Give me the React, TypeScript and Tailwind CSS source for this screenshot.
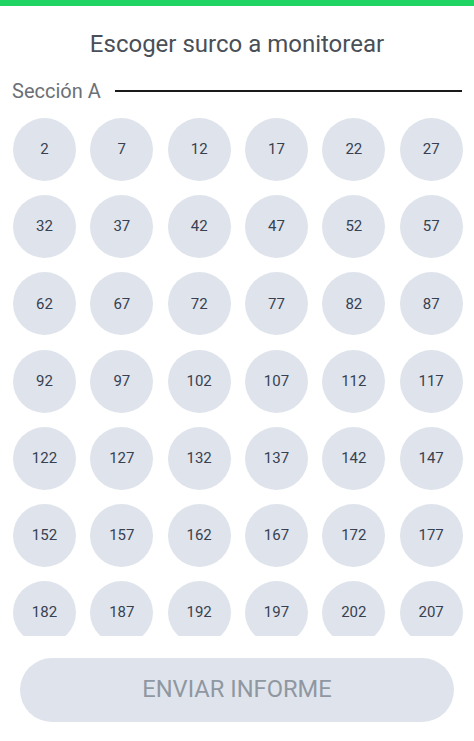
const surcos = Array.from({ length: 42 }, (_, i) => 2 + i * 5);

export default function App() {
  return (
    <div
      className="flex h-[741px] w-full flex-col overflow-hidden bg-white"
      style={{ fontFamily: "Roboto, 'Liberation Sans', sans-serif" }}
    >
      {/* top accent bar */}
      <div className="h-[6px] w-full bg-[#1fd463]" />

      <h1 className="mt-[23px] text-center text-[24px] leading-[30px] text-[#4a4f57]">
        Escoger surco a monitorear
      </h1>

      {/* section header */}
      <div className="mt-[19px] flex h-[26px] items-center gap-[14px] px-[12px]">
        <span className="text-[20px] leading-[26px] text-[#6b6f76]">Sección A</span>
        <div className="h-[2px] flex-1 bg-[#1a1a1a]" />
      </div>

      {/* scroll area with row buttons */}
      <div className="mt-[14px] h-[518px] overflow-hidden pl-[13px] pr-[11px]">
        <div className="grid grid-cols-6 gap-x-[14px] gap-y-[14.2px]">
          {surcos.map((n) => (
            <button
              key={n}
              className="flex h-[63px] w-[63px] items-center justify-center rounded-full bg-[#dfe4ec] text-[15px] text-[#374151]"
            >
              {n}
            </button>
          ))}
        </div>
      </div>

      <div className="px-[20px] pt-[22px]">
        <button
          disabled
          className="flex h-[64px] w-full items-center justify-center rounded-full bg-[#dfe4ec] text-[23.7px] text-[#8f97a1]"
        >
          ENVIAR INFORME
        </button>
      </div>
    </div>
  );
}
